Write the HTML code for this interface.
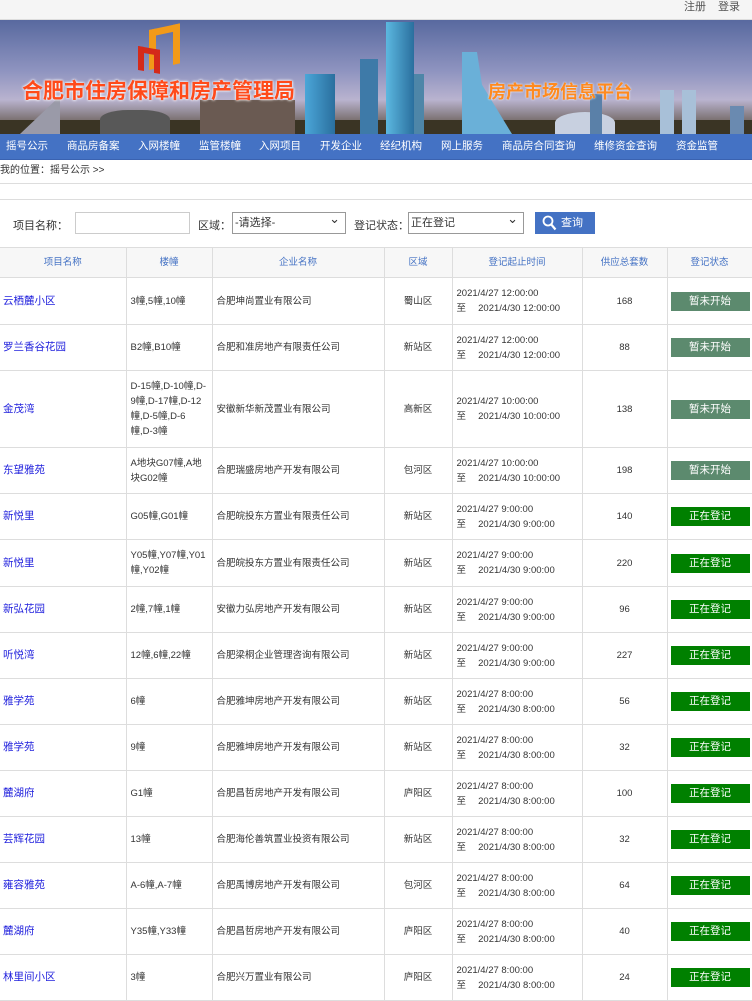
<!DOCTYPE html>
<html><head><meta charset="utf-8"><style>
*{margin:0;padding:0;box-sizing:border-box}
body{width:752px;height:1000px;overflow:hidden;background:#fff;font-family:"Liberation Sans","Noto Sans CJK SC",sans-serif;font-size:11px;color:#333;position:relative}
.top{height:20px;background:#f5f5f5;border-bottom:1px solid #ddd;text-align:right;font-size:11px;line-height:15px;color:#555}
.top span{margin-right:12px}
.banner{position:relative;height:114px;background:linear-gradient(180deg,#58699f 0%,#8f94c0 45%,#b9b3cf 70%,#7a7070 88%,#3d3a2c 100%);overflow:hidden}
.b{position:absolute;bottom:0}
.t1{position:absolute;left:22px;top:55px;font-size:21px;font-weight:bold;color:#ff4a1a;white-space:nowrap;text-shadow:0 0 2px #fff,0 0 3px #fff}
.t2{position:absolute;left:488px;top:58px;font-size:18px;font-weight:bold;color:#ff8a1e;white-space:nowrap;text-shadow:0 0 2px #fff}
.nav{height:26px;background:#4472c4;color:#fff;font-size:10.5px;line-height:25px;white-space:nowrap;position:relative;border-bottom:1px solid #3a62b0}
.nav span{position:absolute;top:0}
.crumb{height:24px;line-height:22px;border-bottom:1px solid #ddd;font-size:10px;color:#333}
.bar2{height:16px;border-bottom:1px solid #ddd}
.search{height:47px;position:relative;font-size:11px;color:#333}
.search .l{position:absolute;top:17px}
.box{position:absolute;top:12px;height:22px;border:1px solid #ccc;background:#fff}
.sel{border:1px solid #999;font-size:11px;line-height:20px;padding-left:2px}
.sel:after{content:"⌄";position:absolute;right:5px;top:-4px;font-size:13px}
.btn{position:absolute;left:535px;top:12px;width:60px;height:22px;background:#4472c4;color:#fff;line-height:22px;padding-left:26px}
table{border-collapse:collapse;table-layout:fixed;width:752px;position:absolute;top:247px;left:0}
td,th{border:1px solid #ddd;font-size:9.5px;line-height:15px;padding:0 4px;vertical-align:middle}
th{height:30px;background:#f7f7f7;color:#4472c4;font-weight:normal;text-align:center}
tr td:first-child,tr th:first-child{border-left:none}
tr td:first-child{color:#2222dd;font-size:10.5px;padding-left:3px}
td.c{text-align:center}
td.s{padding:0 2px 0 3px}
.st{height:19px;line-height:19px;color:#fff;text-align:center;font-size:10.5px;background:#008000}
.g{background:#5c8a6e}
</style></head><body>
<div class="top"><span>注册</span><span>登录</span></div>
<div class="banner">
<div style="position:absolute;left:149px;top:10px;width:31px;height:40px;border:7px solid #f29a18;border-bottom:none;transform:skewY(-12deg);transform-origin:left bottom"></div>
<div style="position:absolute;left:138px;top:26px;width:22px;height:24px;border:6px solid #d42a1a;border-bottom:none;transform:skewY(10deg);transform-origin:left bottom"></div>
<div class="b" style="left:0;width:752px;height:14px;background:#3a3424"></div>
<div class="b" style="left:20px;width:40px;height:38px;background:#9a9aa8;clip-path:polygon(0 100%,100% 0,100% 100%)"></div>
<div class="b" style="left:100px;width:70px;height:24px;background:#585858;border-radius:40% 40% 0 0"></div>
<div class="b" style="left:200px;width:95px;height:34px;background:#6a5a52"></div>
<div class="b" style="left:305px;width:30px;height:60px;background:linear-gradient(90deg,#4ba6d8,#2a6f9e)"></div>
<div class="b" style="left:360px;width:18px;height:75px;background:#3e7aa8"></div>
<div class="b" style="left:386px;width:28px;height:112px;background:linear-gradient(90deg,#5cb8e0,#2a6f9e)"></div>
<div class="b" style="left:414px;width:10px;height:60px;background:#4e86a8"></div>
<div class="b" style="left:462px;width:50px;height:82px;background:#6ab0d8;clip-path:polygon(0 0,30% 0,40% 40%,100% 100%,0 100%)"></div>
<div class="b" style="left:555px;width:60px;height:22px;background:#c8d0e0;border-radius:50% 50% 0 0"></div>
<div class="b" style="left:590px;width:12px;height:40px;background:#5a80a8"></div>
<div class="b" style="left:660px;width:14px;height:44px;background:#a8c0d8"></div>
<div class="b" style="left:682px;width:14px;height:44px;background:#a8c0d8"></div>
<div class="b" style="left:730px;width:14px;height:28px;background:#6a8ab0"></div>
<div class="t1">合肥市住房保障和房产管理局</div>
<div class="t2">房产市场信息平台</div>
</div>
<div class="nav"><span style="left:6px">摇号公示</span><span style="left:67px">商品房备案</span><span style="left:138px">入网楼幢</span><span style="left:199px">监管楼幢</span><span style="left:259px">入网项目</span><span style="left:320px">开发企业</span><span style="left:380px">经纪机构</span><span style="left:441px">网上服务</span><span style="left:502px">商品房合同查询</span><span style="left:594px">维修资金查询</span><span style="left:676px">资金监管</span></div>
<div class="crumb">我的位置：摇号公示 &gt;&gt;</div>
<div class="bar2"></div>
<div class="search">
<span class="l" style="left:13px">项目名称：</span>
<div class="box" style="left:75px;width:115px"></div>
<span class="l" style="left:198px">区域：</span>
<div class="box sel" style="left:232px;width:114px">-请选择-</div>
<span class="l" style="left:354px">登记状态：</span>
<div class="box sel" style="left:408px;width:116px">正在登记</div>
<div class="btn"><svg style="position:absolute;left:7px;top:3px" width="15" height="16" viewBox="0 0 15 16"><circle cx="6" cy="6" r="4.5" fill="none" stroke="#fff" stroke-width="1.8"/><path d="M9.3 9.5L13.5 14.5" stroke="#fff" stroke-width="2.2"/></svg>查询</div>
</div>
<table>
<colgroup><col style="width:126px"><col style="width:86px"><col style="width:172px"><col style="width:68px"><col style="width:130px"><col style="width:85px"><col style="width:85px"></colgroup>
<tr><th>项目名称</th><th>楼幢</th><th>企业名称</th><th>区域</th><th>登记起止时间</th><th>供应总套数</th><th>登记状态</th></tr>
<tr style="height:47px"><td>云栖麓小区</td><td>3幢,5幢,10幢</td><td>合肥坤尚置业有限公司</td><td class="c">蜀山区</td><td>2021/4/27 12:00:00<br>至　 2021/4/30 12:00:00</td><td class="c">168</td><td class="s"><div class="st g">暂未开始</div></td></tr>
<tr style="height:46px"><td>罗兰香谷花园</td><td>B2幢,B10幢</td><td>合肥和准房地产有限责任公司</td><td class="c">新站区</td><td>2021/4/27 12:00:00<br>至　 2021/4/30 12:00:00</td><td class="c">88</td><td class="s"><div class="st g">暂未开始</div></td></tr>
<tr style="height:77px"><td>金茂湾</td><td>D-15幢,D-10幢,D-9幢,D-17幢,D-12幢,D-5幢,D-6幢,D-3幢</td><td>安徽新华新茂置业有限公司</td><td class="c">高新区</td><td>2021/4/27 10:00:00<br>至　 2021/4/30 10:00:00</td><td class="c">138</td><td class="s"><div class="st g">暂未开始</div></td></tr>
<tr style="height:46px"><td>东望雅苑</td><td>A地块G07幢,A地块G02幢</td><td>合肥瑞盛房地产开发有限公司</td><td class="c">包河区</td><td>2021/4/27 10:00:00<br>至　 2021/4/30 10:00:00</td><td class="c">198</td><td class="s"><div class="st g">暂未开始</div></td></tr>
<tr style="height:46px"><td>新悦里</td><td>G05幢,G01幢</td><td>合肥皖投东方置业有限责任公司</td><td class="c">新站区</td><td>2021/4/27 9:00:00<br>至　 2021/4/30 9:00:00</td><td class="c">140</td><td class="s"><div class="st">正在登记</div></td></tr>
<tr style="height:47px"><td>新悦里</td><td>Y05幢,Y07幢,Y01幢,Y02幢</td><td>合肥皖投东方置业有限责任公司</td><td class="c">新站区</td><td>2021/4/27 9:00:00<br>至　 2021/4/30 9:00:00</td><td class="c">220</td><td class="s"><div class="st">正在登记</div></td></tr>
<tr style="height:46px"><td>新弘花园</td><td>2幢,7幢,1幢</td><td>安徽力弘房地产开发有限公司</td><td class="c">新站区</td><td>2021/4/27 9:00:00<br>至　 2021/4/30 9:00:00</td><td class="c">96</td><td class="s"><div class="st">正在登记</div></td></tr>
<tr style="height:46px"><td>听悦湾</td><td>12幢,6幢,22幢</td><td>合肥梁桐企业管理咨询有限公司</td><td class="c">新站区</td><td>2021/4/27 9:00:00<br>至　 2021/4/30 9:00:00</td><td class="c">227</td><td class="s"><div class="st">正在登记</div></td></tr>
<tr style="height:46px"><td>雅学苑</td><td>6幢</td><td>合肥雅坤房地产开发有限公司</td><td class="c">新站区</td><td>2021/4/27 8:00:00<br>至　 2021/4/30 8:00:00</td><td class="c">56</td><td class="s"><div class="st">正在登记</div></td></tr>
<tr style="height:46px"><td>雅学苑</td><td>9幢</td><td>合肥雅坤房地产开发有限公司</td><td class="c">新站区</td><td>2021/4/27 8:00:00<br>至　 2021/4/30 8:00:00</td><td class="c">32</td><td class="s"><div class="st">正在登记</div></td></tr>
<tr style="height:46px"><td>麓湖府</td><td>G1幢</td><td>合肥昌哲房地产开发有限公司</td><td class="c">庐阳区</td><td>2021/4/27 8:00:00<br>至　 2021/4/30 8:00:00</td><td class="c">100</td><td class="s"><div class="st">正在登记</div></td></tr>
<tr style="height:46px"><td>芸辉花园</td><td>13幢</td><td>合肥海伦善筑置业投资有限公司</td><td class="c">新站区</td><td>2021/4/27 8:00:00<br>至　 2021/4/30 8:00:00</td><td class="c">32</td><td class="s"><div class="st">正在登记</div></td></tr>
<tr style="height:46px"><td>雍容雅苑</td><td>A-6幢,A-7幢</td><td>合肥禹博房地产开发有限公司</td><td class="c">包河区</td><td>2021/4/27 8:00:00<br>至　 2021/4/30 8:00:00</td><td class="c">64</td><td class="s"><div class="st">正在登记</div></td></tr>
<tr style="height:46px"><td>麓湖府</td><td>Y35幢,Y33幢</td><td>合肥昌哲房地产开发有限公司</td><td class="c">庐阳区</td><td>2021/4/27 8:00:00<br>至　 2021/4/30 8:00:00</td><td class="c">40</td><td class="s"><div class="st">正在登记</div></td></tr>
<tr style="height:46px"><td>林里间小区</td><td>3幢</td><td>合肥兴万置业有限公司</td><td class="c">庐阳区</td><td>2021/4/27 8:00:00<br>至　 2021/4/30 8:00:00</td><td class="c">24</td><td class="s"><div class="st">正在登记</div></td></tr>
</table>
</body></html>
